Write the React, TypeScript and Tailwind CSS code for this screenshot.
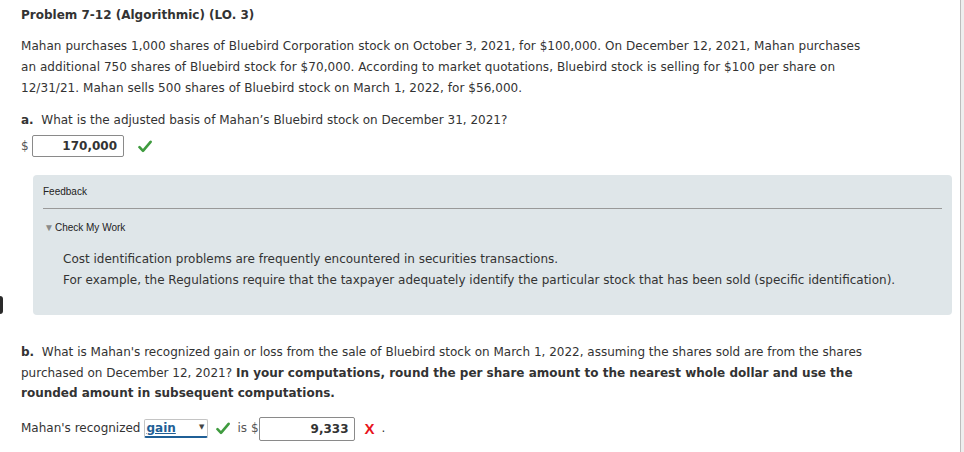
import React from "react";

const Check = () => (
  <svg width="14" height="13" viewBox="0 0 14 13" className="shrink-0">
    <path d="M1.5 7.2 L5 10.8 L12.6 1.8" fill="none" stroke="#3f9b3f" strokeWidth="2.6" strokeLinecap="round" strokeLinejoin="round" />
  </svg>
);

export default function App() {
  const verdana = { fontFamily: '"DejaVu Sans", Verdana, sans-serif' };
  const arial = { fontFamily: '"Liberation Sans", Arial, sans-serif' };
  return (
    <div className="relative w-[964px] h-[452px] bg-white flex overflow-hidden text-[#333333]" style={verdana}>
      <div className="absolute left-0 top-[296px] w-[3px] h-[18px] rounded-r-full bg-[#2a2a2a]" />
      <div className="flex-1 pl-[21px] pr-[8px] pt-[7px] text-[12px] leading-[21px]">
        <div className="font-bold text-[12px] leading-[16px]">Problem 7-12 (Algorithmic) (LO. 3)</div>
        <p className="mt-[13px] tracking-[0.05px]">
          Mahan purchases 1,000 shares of Bluebird Corporation stock on October 3, 2021, for $100,000. On December 12, 2021, Mahan purchases
          <br />
          an additional 750 shares of Bluebird stock for $70,000. According to market quotations, Bluebird stock is selling for $100 per share on
          <br />
          12/31/21. Mahan sells 500 shares of Bluebird stock on March 1, 2022, for $56,000.
        </p>
        <p className="mt-[11px]">
          <span className="font-bold">a.</span>&nbsp; What is the adjusted basis of Mahan’s Bluebird stock on December 31, 2021?
        </p>
        <div className="flex items-center mt-[4px] h-[22px]">
          <span className="text-[12px] text-[#555] w-[11px]">$</span>
          <div className="w-[92px] h-[22px] border border-[#8a8a8a] rounded-[2px] flex items-center justify-end pr-[6px] font-bold text-[12px] leading-none">170,000</div>
          <span className="ml-[14px] flex items-center"><Check /></span>
        </div>

        <div className="mt-[18px] ml-[12px] bg-[#dfe6e9] rounded-[4px] px-[10px] pt-[11px] pb-[24px]">
          <div className="text-[10px] leading-[12px] text-[#222]" style={arial}>Feedback</div>
          <div className="mt-[10px] border-t border-[#999]" />
          <div className="mt-[13px] flex items-center text-[10px] leading-[12px] text-[#222]" style={arial}>
            <span className="text-[#8a8a8a] text-[10px] leading-none mr-[1px] ml-[1px]">▼</span>Check My Work
          </div>
          <div className="mt-[15px] pl-[20px] text-[12px] leading-[21px]">
            <div className="leading-[21px]">Cost identification problems are frequently encountered in securities transactions.</div>
            <div className="leading-[21px]">For example, the Regulations require that the taxpayer adequately identify the particular stock that has been sold (specific identification).</div>
          </div>
        </div>

        <p className="mt-[27px] leading-[20.5px]">
          <span className="font-bold">b.</span>&nbsp; What is Mahan's recognized gain or loss from the sale of Bluebird stock on March 1, 2022, assuming the shares sold are from the shares
          <br />
          purchased on December 12, 2021? <span className="font-bold">In your computations, round the per share amount to the nearest whole dollar and use the</span>
          <br />
          <span className="font-bold">rounded amount in subsequent computations.</span>
        </p>
        <div className="mt-[13px] flex items-center h-[24px]">
          <span>Mahan's recognized</span>
          <div className="ml-[4px] w-[64px] h-[19px] relative flex items-center border border-[#c4c4c4] border-b-[2px] border-b-[#1f5f96] rounded-[2px] pl-[1px]">
            <span className="font-bold text-[#1f5f96] underline leading-none text-[12px]">gain</span>
            <span className="absolute right-[3px] top-[4px] text-[7px] leading-none text-[#444]">▼</span>
          </div>
          <span className="ml-[8px] flex items-center"><Check /></span>
          <span className="ml-[7px] text-[#555]">is $</span>
          <div className="w-[96px] h-[24px] border border-[#8a8a8a] rounded-[2px] flex items-center justify-end pr-[5px] font-bold leading-none">9,333</div>
          <span className="ml-[10px] text-[#e8141c] font-bold text-[15px] leading-none" style={arial}>X</span>
          <span className="ml-[7px]">.</span>
        </div>
      </div>
      <div className="w-[4px] h-full border-l border-[#bdbdbd] bg-[#eeeeee]" />
    </div>
  );
}
